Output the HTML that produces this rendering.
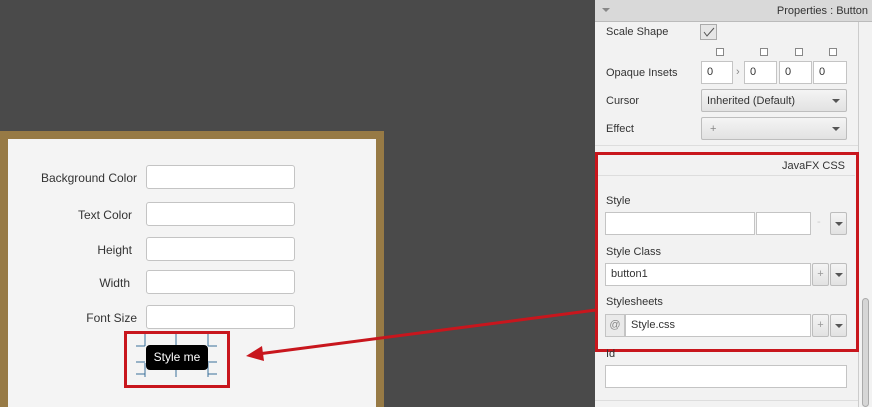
<!DOCTYPE html>
<html><head><style>
*{box-sizing:border-box;margin:0;padding:0}
body{width:872px;height:407px;overflow:hidden;background:#4a4a4a;font-family:"Liberation Sans",sans-serif;font-size:11px;color:#333;position:relative}
.a{position:absolute}
.in{position:absolute;background:#fff;border:1px solid #c4c4c4;border-radius:3px}
.lbl{position:absolute;font-size:12px;color:#333;text-align:right;width:130px}
.rl{position:absolute;font-size:11px;color:#333}
.dd{position:absolute;background:linear-gradient(#f4f4f4,#e2e2e2);border:1px solid #bdbdbd;border-radius:2px}
.tri{position:absolute;width:0;height:0;border-left:4px solid transparent;border-right:4px solid transparent;border-top:4px solid #555}
.cb{position:absolute;width:8px;height:8px;border:1px solid #888;background:#fff}
</style></head><body>
<div class="a" style="left:0;top:131px;width:384px;height:276px;background:#977a45"></div>
<div class="a" style="left:8px;top:139px;width:368px;height:268px;background:#f4f4f4"></div>
<div class="lbl" style="left:7px;top:171px">Background Color</div>
<div class="lbl" style="left:2px;top:208px">Text Color</div>
<div class="lbl" style="left:2px;top:243px">Height</div>
<div class="lbl" style="left:0px;top:276px">Width</div>
<div class="lbl" style="left:7px;top:311px">Font Size</div>
<div class="in" style="left:146px;top:165px;width:149px;height:24px"></div>
<div class="in" style="left:146px;top:202px;width:149px;height:24px"></div>
<div class="in" style="left:146px;top:237px;width:149px;height:24px"></div>
<div class="in" style="left:146px;top:270px;width:149px;height:24px"></div>
<div class="in" style="left:146px;top:305px;width:149px;height:24px"></div>
<svg class="a" style="left:130px;top:333px" width="90" height="52" stroke="#3a6f9a" stroke-width="1" fill="none">
<path d="M15 0v13M6 13h9M46 0v13M78 0v13M78 13h9M6 29h9M78 29h9M15 30v14M46 30v14M78 30v14M6 41h9M78 41h9"/></svg>
<div class="a" style="left:146px;top:345px;width:62px;height:25px;background:#000;border-radius:4px;color:#fff;font-size:12px;text-align:center;line-height:25px">Style me</div>
<div class="a" style="left:124px;top:331px;width:106px;height:57px;border:3px solid #c8161d"></div>

<div class="a" style="left:595px;top:0;width:277px;height:407px;background:#f2f2f2"></div>
<div class="a" style="left:595px;top:0;width:277px;height:22px;background:#d9d9d9;border-bottom:1px solid #bbb"></div>
<div class="tri" style="left:602px;top:8px;border-top-color:#888"></div>
<div class="rl" style="right:4px;top:5px;color:#333">Properties : Button</div>
<div class="a" style="left:858px;top:22px;width:1px;height:385px;background:#ccc"></div>
<div class="rl" style="left:606px;top:26px">Scale Shape</div>
<div class="a" style="left:700px;top:24px;width:17px;height:16px;background:#e6e6e6;border:1px solid #aaa"></div>
<svg class="a" style="left:703px;top:27px" width="12" height="10"><path d="M1 5l3 4 7-8" stroke="#555" fill="none"/></svg>
<div class="cb" style="left:716px;top:48px"></div><div class="cb" style="left:760px;top:48px"></div><div class="cb" style="left:795px;top:48px"></div><div class="cb" style="left:829px;top:48px"></div>
<div class="rl" style="left:606px;top:67px">Opaque Insets</div>
<div class="in" style="left:701px;top:61px;width:32px;height:23px;border-radius:0;padding:4px 5px">0</div>
<div class="rl" style="left:736px;top:66px;color:#888">›</div>
<div class="in" style="left:744px;top:61px;width:33px;height:23px;border-radius:0;padding:4px 5px">0</div>
<div class="in" style="left:779px;top:61px;width:33px;height:23px;border-radius:0;padding:4px 5px">0</div>
<div class="in" style="left:813px;top:61px;width:34px;height:23px;border-radius:0;padding:4px 5px">0</div>
<div class="rl" style="left:606px;top:95px">Cursor</div>
<div class="dd" style="left:701px;top:89px;width:146px;height:23px;padding:5px 5px">Inherited (Default)</div>
<div class="tri" style="left:832px;top:99px"></div>
<div class="rl" style="left:606px;top:123px">Effect</div>
<div class="dd" style="left:701px;top:117px;width:146px;height:23px;padding:5px 8px;color:#888">+</div>
<div class="tri" style="left:832px;top:127px"></div>
<div class="a" style="left:595px;top:145px;width:263px;height:1px;background:#ddd"></div>
<div class="rl" style="right:27px;top:160px">JavaFX CSS</div>
<div class="a" style="left:598px;top:175px;width:257px;height:1px;background:#ddd"></div>
<div class="rl" style="left:606px;top:195px">Style</div>
<div class="in" style="left:605px;top:212px;width:150px;height:23px;border-radius:0"></div>
<div class="in" style="left:756px;top:212px;width:55px;height:23px;border-radius:0"></div>
<div class="rl" style="left:817px;top:216px;color:#ccc">-</div>
<div class="dd" style="left:830px;top:212px;width:17px;height:23px"></div><div class="tri" style="left:835px;top:222px"></div>
<div class="rl" style="left:606px;top:246px">Style Class</div>
<div class="in" style="left:605px;top:263px;width:206px;height:23px;border-radius:0;padding:4px 5px">button1</div>
<div class="dd" style="left:812px;top:263px;width:17px;height:23px;color:#999;text-align:center;line-height:20px">+</div>
<div class="dd" style="left:830px;top:263px;width:17px;height:23px"></div><div class="tri" style="left:835px;top:273px"></div>
<div class="rl" style="left:606px;top:296px">Stylesheets</div>
<div class="a" style="left:605px;top:314px;width:20px;height:23px;background:#eaeaea;border:1px solid #c4c4c4;color:#888;text-align:center;line-height:21px">@</div>
<div class="in" style="left:625px;top:314px;width:186px;height:23px;border-radius:0;padding:4px 5px">Style.css</div>
<div class="dd" style="left:812px;top:314px;width:17px;height:23px;color:#999;text-align:center;line-height:20px">+</div>
<div class="dd" style="left:830px;top:314px;width:17px;height:23px"></div><div class="tri" style="left:835px;top:324px"></div>
<div class="a" style="left:595px;top:152px;width:264px;height:200px;border:3px solid #c8161d"></div>
<div class="rl" style="left:606px;top:348px">Id</div>
<div class="in" style="left:605px;top:365px;width:242px;height:23px;border-radius:0"></div>
<div class="a" style="left:595px;top:400px;width:263px;height:1px;background:#ddd"></div>
<div class="a" style="left:862px;top:298px;width:7px;height:109px;background:#d6d6d6;border:1px solid #aaa;border-radius:4px"></div>
<svg class="a" style="left:0;top:0" width="872" height="407"><line x1="596" y1="310" x2="258" y2="354" stroke="#c8161d" stroke-width="3"/><polygon points="246,356 262,346 264,361" fill="#c8161d"/></svg>
</body></html>
